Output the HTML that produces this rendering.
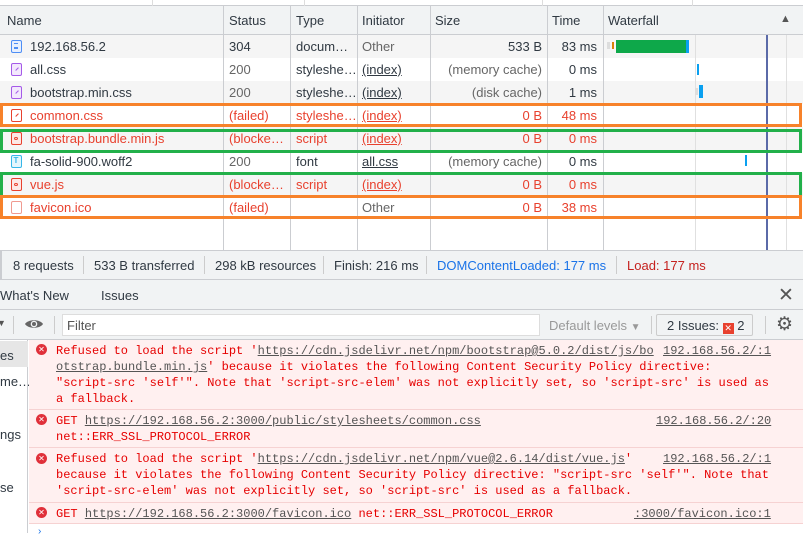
<!DOCTYPE html>
<html><head><meta charset="utf-8"><style>
*{box-sizing:border-box;margin:0;padding:0}
body{width:803px;height:533px;overflow:hidden;background:#fff;font-family:"Liberation Sans",Arial,sans-serif;font-size:13px;color:#303942;position:relative}
.a{position:absolute;white-space:nowrap}
.row{position:absolute;left:0;width:803px;height:23px}
.g{background:#f5f5f5}
.vl{position:absolute;top:6px;height:244px;width:1px;background:#cbcdd1}
.c{position:absolute;line-height:23px;white-space:nowrap;overflow:hidden;font-size:13px}
.red{color:#e8412e}
.u{text-decoration:underline}
.mono{font-family:"Liberation Mono",monospace;font-size:12px;color:#e60000;line-height:16px}
.mono .l{color:#555;text-decoration:underline}
.ico{position:absolute;left:11px;width:11px;height:13px;border-radius:2px}
.ico i{position:absolute;left:2px;top:3px;width:4px;height:4px;font-style:normal}
</style></head><body>
<div class="a" style="left:0;top:0;width:803px;height:6px;background:#fff;border-bottom:1px solid #cbcdd1"></div>
<div class="a" style="left:152px;top:0;width:1px;height:6px;background:#ddd"></div>
<div class="a" style="left:304px;top:0;width:1px;height:6px;background:#ddd"></div>
<div class="a" style="left:542px;top:0;width:1px;height:6px;background:#ddd"></div>
<div class="a" style="left:692px;top:0;width:1px;height:6px;background:#ddd"></div>
<div class="a" style="left:0;top:6px;width:803px;height:29px;background:#f1f3f4;border-bottom:1px solid #cbcdd1"></div>
<div class="a" style="left:7px;top:13px;font-size:13px">Name</div>
<div class="a" style="left:229px;top:13px;font-size:13px">Status</div>
<div class="a" style="left:296px;top:13px;font-size:13px">Type</div>
<div class="a" style="left:362px;top:13px;font-size:13px">Initiator</div>
<div class="a" style="left:435px;top:13px;font-size:13px">Size</div>
<div class="a" style="left:552px;top:13px;font-size:13px">Time</div>
<div class="a" style="left:608px;top:13px;font-size:13px">Waterfall</div>
<div class="a" style="left:780px;top:13px;font-size:11px;color:#555">▲</div>
<div class="row g" style="top:35px"></div>
<div class="row" style="top:58px"></div>
<div class="row g" style="top:81px"></div>
<div class="row" style="top:104px"></div>
<div class="row g" style="top:127px"></div>
<div class="row" style="top:150px"></div>
<div class="row g" style="top:173px"></div>
<div class="row" style="top:196px"></div>
<div class="vl" style="left:223px"></div><div class="vl" style="left:290px"></div><div class="vl" style="left:357px"></div><div class="vl" style="left:430px"></div><div class="vl" style="left:547px"></div><div class="vl" style="left:603px"></div>
<div class="a" style="left:695px;top:35px;width:1px;height:215px;background:#e0e0e0"></div>
<div class="a" style="left:786px;top:35px;width:1px;height:215px;background:#e0e0e0"></div>
<div class="a" style="left:766px;top:35px;width:2px;height:215px;background:#5b6aa8"></div>
<div class="a" style="left:607px;top:42px;width:3px;height:7px;background:#ddd"></div>
<div class="a" style="left:612px;top:42px;width:2px;height:7px;background:#d7830a"></div>
<div class="a" style="left:616px;top:40px;width:70px;height:13px;background:#0ea84a"></div>
<div class="a" style="left:686px;top:40px;width:3px;height:13px;background:#0aa0f0"></div>
<div class="a" style="left:697px;top:64px;width:2px;height:11px;background:#0aa0f0"></div>
<div class="a" style="left:695px;top:88px;width:3px;height:7px;background:#ddd"></div>
<div class="a" style="left:699px;top:85px;width:4px;height:13px;background:#0aa0f0"></div>
<div class="a" style="left:745px;top:155px;width:2px;height:11px;background:#0aa0f0"></div>

<div class="ico" style="top:40px;border:1.5px solid #4e8ef5;background:#e8f0fe"><i style="top:2px;height:6px;border-top:1px solid #4e8ef5;border-bottom:1px solid #4e8ef5;box-shadow:inset 0 -3px 0 -2px #4e8ef5"></i></div>
<div class="c" style="left:30px;top:35px">192.168.56.2</div><div class="c" style="left:229px;top:35px">304</div><div class="c" style="left:296px;top:35px">docum…</div><div class="c" style="left:362px;top:35px;color:#666">Other</div><div class="c" style="left:435px;top:35px;width:107px;text-align:right">533 B</div><div class="c" style="left:552px;top:35px;width:45px;text-align:right">83 ms</div>
<div class="ico" style="top:63px;border:1.5px solid #a55ae8;background:#f3e8fd"><i style="border-right:1.5px solid #a55ae8;transform:rotate(45deg);left:2px;top:2px"></i></div>
<div class="c" style="left:30px;top:58px">all.css</div><div class="c" style="left:229px;top:58px;color:#666">200</div><div class="c" style="left:296px;top:58px">styleshe…</div><div class="c u" style="left:362px;top:58px">(index)</div><div class="c" style="left:435px;top:58px;width:107px;text-align:right;color:#666">(memory cache)</div><div class="c" style="left:552px;top:58px;width:45px;text-align:right">0 ms</div>
<div class="ico" style="top:86px;border:1.5px solid #a55ae8;background:#f3e8fd"><i style="border-right:1.5px solid #a55ae8;transform:rotate(45deg);left:2px;top:2px"></i></div>
<div class="c" style="left:30px;top:81px">bootstrap.min.css</div><div class="c" style="left:229px;top:81px;color:#666">200</div><div class="c" style="left:296px;top:81px">styleshe…</div><div class="c u" style="left:362px;top:81px">(index)</div><div class="c" style="left:435px;top:81px;width:107px;text-align:right;color:#666">(disk cache)</div><div class="c" style="left:552px;top:81px;width:45px;text-align:right">1 ms</div>
<div class="ico" style="top:109px;border:1.5px solid #e8412e;background:#fff"><i style="border-right:1.5px solid #e8412e;transform:rotate(45deg);left:2px;top:2px"></i></div>
<div class="c red" style="left:30px;top:104px">common.css</div><div class="c red" style="left:229px;top:104px">(failed)</div><div class="c red" style="left:296px;top:104px">styleshe…</div><div class="c red u" style="left:362px;top:104px">(index)</div><div class="c red" style="left:435px;top:104px;width:107px;text-align:right">0 B</div><div class="c red" style="left:552px;top:104px;width:45px;text-align:right">48 ms</div>
<div class="ico" style="top:132px;border:1.5px solid #e8412e;background:#fde8e6"><i style="left:2px;top:4px;width:4px;height:3px;border:1px solid #e8412e;border-radius:50%"></i></div>
<div class="c red" style="left:30px;top:127px">bootstrap.bundle.min.js</div><div class="c red" style="left:229px;top:127px">(blocke…</div><div class="c red" style="left:296px;top:127px">script</div><div class="c red u" style="left:362px;top:127px">(index)</div><div class="c red" style="left:435px;top:127px;width:107px;text-align:right">0 B</div><div class="c red" style="left:552px;top:127px;width:45px;text-align:right">0 ms</div>
<div class="ico" style="top:155px;border:1.5px solid #36b7e8;background:#e4f6fd"><i style="left:1px;top:1px;width:6px;height:7px;color:#36b7e8;font-size:8px;font-weight:bold;line-height:8px;text-align:center">T</i></div>
<div class="c" style="left:30px;top:150px">fa-solid-900.woff2</div><div class="c" style="left:229px;top:150px;color:#666">200</div><div class="c" style="left:296px;top:150px">font</div><div class="c u" style="left:362px;top:150px">all.css</div><div class="c" style="left:435px;top:150px;width:107px;text-align:right;color:#666">(memory cache)</div><div class="c" style="left:552px;top:150px;width:45px;text-align:right">0 ms</div>
<div class="ico" style="top:178px;border:1.5px solid #e8412e;background:#fde8e6"><i style="left:2px;top:4px;width:4px;height:3px;border:1px solid #e8412e;border-radius:50%"></i></div>
<div class="c red" style="left:30px;top:173px">vue.js</div><div class="c red" style="left:229px;top:173px">(blocke…</div><div class="c red" style="left:296px;top:173px">script</div><div class="c red u" style="left:362px;top:173px">(index)</div><div class="c red" style="left:435px;top:173px;width:107px;text-align:right">0 B</div><div class="c red" style="left:552px;top:173px;width:45px;text-align:right">0 ms</div>
<div class="ico" style="top:201px;border:1.5px solid #f09a90;background:#fff"></div>
<div class="c red" style="left:30px;top:196px">favicon.ico</div><div class="c red" style="left:229px;top:196px">(failed)</div><div class="c" style="left:362px;top:196px;color:#666">Other</div><div class="c red" style="left:435px;top:196px;width:107px;text-align:right">0 B</div><div class="c red" style="left:552px;top:196px;width:45px;text-align:right">38 ms</div>
<div class="a" style="left:0;top:103px;width:802px;height:24px;border:3px solid #f7822a"></div>
<div class="a" style="left:0;top:129px;width:802px;height:24px;border:3px solid #22b04a"></div>
<div class="a" style="left:0;top:172px;width:802px;height:24px;border:3px solid #22b04a;border-bottom:none"></div>
<div class="a" style="left:0;top:195px;width:802px;height:24px;border:3px solid #f7822a"></div>
<div class="a" style="left:0;top:250px;width:803px;height:30px;background:#f1f3f4;border-top:1px solid #cbcdd1;border-bottom:1px solid #cbcdd1"></div>
<div class="a" style="left:0;top:250px;width:2px;height:30px;background:#cbcdd1"></div>
<div class="a" style="left:13px;top:258px;font-size:13px">8 requests</div>
<div class="a" style="left:83px;top:256px;width:1px;height:18px;background:#ccc"></div>
<div class="a" style="left:94px;top:258px;font-size:13px">533 B transferred</div>
<div class="a" style="left:204px;top:256px;width:1px;height:18px;background:#ccc"></div>
<div class="a" style="left:215px;top:258px;font-size:13px">298 kB resources</div>
<div class="a" style="left:323px;top:256px;width:1px;height:18px;background:#ccc"></div>
<div class="a" style="left:334px;top:258px;font-size:13px">Finish: 216 ms</div>
<div class="a" style="left:426px;top:256px;width:1px;height:18px;background:#ccc"></div>
<div class="a" style="left:437px;top:258px;font-size:13px;color:#1a73e8">DOMContentLoaded: 177 ms</div>
<div class="a" style="left:616px;top:256px;width:1px;height:18px;background:#ccc"></div>
<div class="a" style="left:627px;top:258px;font-size:13px;color:#c5221f">Load: 177 ms</div>
<div class="a" style="left:0;top:280px;width:803px;height:30px;background:#f1f3f4;border-bottom:1px solid #cbcdd1"></div>
<div class="a" style="left:0;top:288px;font-size:13px">What's New</div>
<div class="a" style="left:101px;top:288px;font-size:13px">Issues</div>
<div class="a" style="left:778px;top:284px;font-size:19px;color:#555">✕</div>
<div class="a" style="left:0;top:310px;width:803px;height:30px;background:#f1f3f4;border-bottom:1px solid #cbcdd1"></div>
<div class="a" style="left:-3px;top:318px;font-size:9px;color:#555">▼</div>
<div class="a" style="left:13px;top:316px;width:1px;height:18px;background:#ccc"></div>
<svg class="a" style="left:24px;top:317px" width="20" height="14" viewBox="0 0 20 14"><path d="M1 7C4 2 16 2 19 7C16 12 4 12 1 7Z" fill="#666"/><circle cx="10" cy="7" r="3.3" fill="#f1f3f4"/><circle cx="10" cy="7" r="2" fill="#666"/></svg>
<div class="a" style="left:54px;top:316px;width:1px;height:18px;background:#ccc"></div>
<div class="a" style="left:62px;top:314px;width:478px;height:22px;background:#fff;border:1px solid #ddd"></div>
<div class="a" style="left:67px;top:318px;font-size:13px;color:#555">Filter</div>
<div class="a" style="left:549px;top:318px;font-size:13px;color:#999">Default levels <span style="font-size:10px">▼</span></div>
<div class="a" style="left:651px;top:316px;width:1px;height:18px;background:#ccc"></div>
<div class="a" style="left:656px;top:314px;width:97px;height:22px;border:1px solid #ccc;border-radius:2px"></div>
<div class="a" style="left:667px;top:318px;font-size:13px">2 Issues: <span style="display:inline-block;width:11px;height:11px;background:#e8412e;color:#fff;font-size:9px;line-height:11px;text-align:center;vertical-align:-1px">✕</span> 2</div>
<div class="a" style="left:765px;top:316px;width:1px;height:18px;background:#ccc"></div>
<div class="a" style="left:776px;top:313px;font-size:19px;color:#555">⚙</div>
<div class="a" style="left:0;top:340px;width:28px;height:193px;background:#fff;border-right:1px solid #cbcdd1"></div>
<div class="a" style="left:0;top:341px;width:28px;height:26px;background:#e6e6e6"></div>
<div class="a" style="left:0;top:348px;font-size:13px">es</div>
<div class="a" style="left:0;top:374px;font-size:13px">me…</div>
<div class="a" style="left:0;top:427px;font-size:13px">ngs</div>
<div class="a" style="left:0;top:480px;font-size:13px">se</div>
<div class="a" style="left:29px;top:340px;width:774px;height:183px;background:#fff0f0"></div>
<div class="a" style="left:29px;top:409px;width:774px;height:1px;background:#f6d2d2"></div>
<div class="a" style="left:29px;top:447px;width:774px;height:1px;background:#f6d2d2"></div>
<div class="a" style="left:29px;top:502px;width:774px;height:1px;background:#f6d2d2"></div>
<div class="a" style="left:29px;top:523px;width:774px;height:1px;background:#f6d2d2"></div>
<div class="a" style="left:36px;top:344px;width:11px;height:11px;border-radius:50%;background:#e0303a;color:#fff;font-size:8px;line-height:11px;text-align:center">✕</div>
<div class="a" style="left:36px;top:414px;width:11px;height:11px;border-radius:50%;background:#e0303a;color:#fff;font-size:8px;line-height:11px;text-align:center">✕</div>
<div class="a" style="left:36px;top:453px;width:11px;height:11px;border-radius:50%;background:#e0303a;color:#fff;font-size:8px;line-height:11px;text-align:center">✕</div>
<div class="a" style="left:36px;top:507px;width:11px;height:11px;border-radius:50%;background:#e0303a;color:#fff;font-size:8px;line-height:11px;text-align:center">✕</div>
<div class="a mono" style="left:56px;top:343px">Refused to load the script '<span class="l">https://cdn.jsdelivr.net/npm/bootstrap@5.0.2/dist/js/bo</span><br><span class="l">otstrap.bundle.min.js</span>' because it violates the following Content Security Policy directive:<br>"script-src 'self'". Note that 'script-src-elem' was not explicitly set, so 'script-src' is used as<br>a fallback.</div>
<div class="a mono" style="left:663px;top:343px"><span class="l">192.168.56.2/:1</span></div>
<div class="a mono" style="left:56px;top:413px">GET <span class="l">https://192.168.56.2:3000/public/stylesheets/common.css</span><br>net::ERR_SSL_PROTOCOL_ERROR</div>
<div class="a mono" style="left:656px;top:413px"><span class="l">192.168.56.2/:20</span></div>
<div class="a mono" style="left:56px;top:451px">Refused to load the script '<span class="l">https://cdn.jsdelivr.net/npm/vue@2.6.14/dist/vue.js</span>'<br>because it violates the following Content Security Policy directive: "script-src 'self'". Note that<br>'script-src-elem' was not explicitly set, so 'script-src' is used as a fallback.</div>
<div class="a mono" style="left:663px;top:451px"><span class="l">192.168.56.2/:1</span></div>
<div class="a mono" style="left:56px;top:506px">GET <span class="l">https://192.168.56.2:3000/favicon.ico</span> net::ERR_SSL_PROTOCOL_ERROR</div>
<div class="a mono" style="left:634px;top:506px"><span class="l">:3000/favicon.ico:1</span></div>
<div class="a" style="left:38px;top:526px;font-size:10px;color:#1a73e8">›</div>
</body></html>
